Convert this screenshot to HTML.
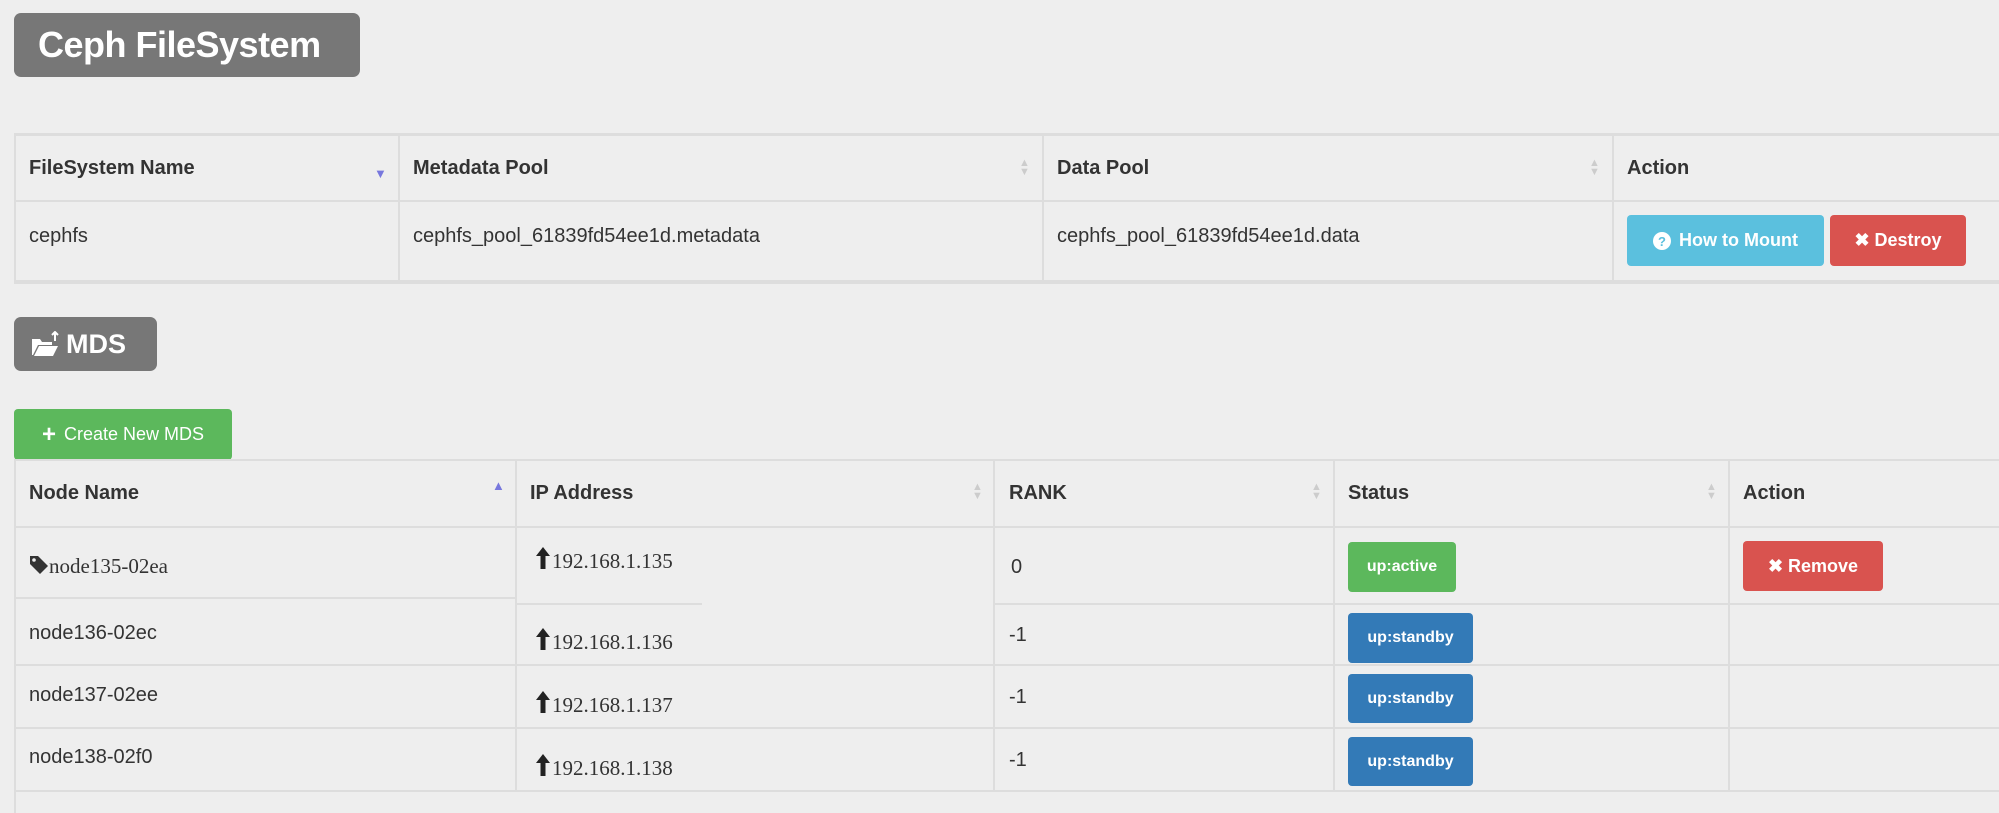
<!DOCTYPE html>
<html><head><meta charset="utf-8"><style>
*{box-sizing:border-box;margin:0;padding:0}
body{width:1999px;height:813px;background:#eeeeee;font-family:"Liberation Sans",Arial,sans-serif;color:#333;position:relative;overflow:hidden}
.a{position:absolute}
.lbl{background:#777;color:#fff;font-weight:bold;border-radius:7px}
.hl{background:#ddd;height:2px}
.vl{background:#ddd;width:2px}
.th{font-weight:bold;font-size:20px;color:#333}
.td{font-size:20px;color:#333}
.btn{color:#fff;font-weight:bold;border-radius:4px;display:flex;align-items:center;justify-content:center;font-size:18px}
.sort{color:#ccc;font-size:11px;line-height:9px;text-align:center}
.ip{font-family:"Liberation Serif",serif;font-size:21px;color:#333}
.ar{vertical-align:-1px;margin-right:1px}
</style></head><body>
<div class="a lbl" style="left:14px;top:13px;width:346px;height:64px;font-size:36px;line-height:64px;padding-left:24px;letter-spacing:-0.5px">Ceph FileSystem</div>

<div class="a hl" style="left:14px;top:133px;width:1985px;height:3px"></div>
<div class="a hl" style="left:14px;top:200px;width:1985px"></div>
<div class="a hl" style="left:14px;top:280px;width:1985px;height:4px"></div>
<div class="a vl" style="left:14px;top:133px;height:150px"></div>
<div class="a vl" style="left:398px;top:135px;height:146px"></div>
<div class="a vl" style="left:1042px;top:135px;height:146px"></div>
<div class="a vl" style="left:1612px;top:135px;height:146px"></div>
<div class="a th" style="left:29px;top:157px">FileSystem Name</div>
<div class="a" style="left:374px;top:166px;color:#7777dd;font-size:13px">▼</div>
<div class="a th" style="left:413px;top:157px">Metadata Pool</div>
<div class="a sort" style="left:1019px;top:159px">▲<br>▼</div>
<div class="a th" style="left:1057px;top:157px">Data Pool</div>
<div class="a sort" style="left:1589px;top:159px">▲<br>▼</div>
<div class="a th" style="left:1627px;top:157px">Action</div>
<div class="a td" style="left:29px;top:225px">cephfs</div>
<div class="a td" style="left:413px;top:225px">cephfs_pool_61839fd54ee1d.metadata</div>
<div class="a td" style="left:1057px;top:225px">cephfs_pool_61839fd54ee1d.data</div>
<div class="a btn" style="left:1627px;top:215px;width:197px;height:51px;background:#5bc0de">
<svg width="18" height="18" viewBox="0 0 18 18" style="margin-right:8px"><circle cx="9" cy="9" r="9" fill="#fff"/><text x="9" y="14" text-anchor="middle" font-size="13" font-weight="bold" fill="#5bc0de" font-family="Liberation Sans">?</text></svg>How to Mount</div>
<div class="a btn" style="left:1830px;top:215px;width:136px;height:51px;background:#d9534f">✖&nbsp;Destroy</div>

<div class="a lbl" style="left:14px;top:317px;width:143px;height:54px;font-size:27px;line-height:54px;padding-left:16px;display:flex;align-items:center">
<svg width="30" height="26" viewBox="0 0 30 26" style="margin-right:6px"><path d="M2 8h8l2 3h10v3H8L3 24H2z" fill="#fff"/><path d="M9 15h19l-5 10H4z" fill="#fff"/><path d="M25 1v9M22 4l3-3 3 3" stroke="#fff" stroke-width="2" fill="none"/></svg>MDS</div>
<div class="a btn" style="left:14px;top:409px;width:218px;height:51px;background:#5cb85c;font-weight:normal;font-size:18px"><b style="font-size:24px;margin-right:8px">+</b>Create New MDS</div>

<div class="a hl" style="left:14px;top:459px;width:1985px"></div>
<div class="a hl" style="left:14px;top:526px;width:1985px"></div>
<div class="a hl" style="left:14px;top:597px;width:502px"></div>
<div class="a hl" style="left:516px;top:603px;width:186px"></div>
<div class="a hl" style="left:994px;top:603px;width:1005px"></div>
<div class="a hl" style="left:14px;top:664px;width:1985px"></div>
<div class="a hl" style="left:14px;top:727px;width:1985px"></div>
<div class="a hl" style="left:14px;top:790px;width:1985px"></div>
<div class="a vl" style="left:14px;top:459px;height:354px"></div>
<div class="a vl" style="left:515px;top:461px;height:330px"></div>
<div class="a vl" style="left:993px;top:461px;height:330px"></div>
<div class="a vl" style="left:1333px;top:461px;height:330px"></div>
<div class="a vl" style="left:1728px;top:461px;height:330px"></div>
<div class="a th" style="left:29px;top:482px">Node Name</div>
<div class="a" style="left:492px;top:478px;color:#7777dd;font-size:13px">▲</div>
<div class="a th" style="left:530px;top:482px">IP Address</div>
<div class="a sort" style="left:972px;top:483px">▲<br>▼</div>
<div class="a th" style="left:1009px;top:482px">RANK</div>
<div class="a sort" style="left:1311px;top:483px">▲<br>▼</div>
<div class="a th" style="left:1348px;top:482px">Status</div>
<div class="a sort" style="left:1706px;top:483px">▲<br>▼</div>
<div class="a th" style="left:1743px;top:482px">Action</div>

<div class="a ip" style="left:29px;top:554px"><svg width="20" height="20" viewBox="0 0 20 20" style="vertical-align:-2px"><path d="M1 1h8l10 10-8 8L1 9z" fill="#333"/><circle cx="5" cy="5" r="1.8" fill="#eee"/></svg>node135-02ea</div>
<div class="td" style="position:absolute;left:29px;top:622px">node136-02ec</div>
<div class="td" style="position:absolute;left:29px;top:684px">node137-02ee</div>
<div class="td" style="position:absolute;left:29px;top:746px">node138-02f0</div>

<div class="a ip" style="left:535px;top:547px"><svg class="ar" width="16" height="22" viewBox="0 0 16 22"><path d="M8 0L15 9H10.5V22H5.5V9H1z" fill="#222"/></svg>192.168.1.135</div>
<div class="a ip" style="left:535px;top:628px"><svg class="ar" width="16" height="22" viewBox="0 0 16 22"><path d="M8 0L15 9H10.5V22H5.5V9H1z" fill="#222"/></svg>192.168.1.136</div>
<div class="a ip" style="left:535px;top:691px"><svg class="ar" width="16" height="22" viewBox="0 0 16 22"><path d="M8 0L15 9H10.5V22H5.5V9H1z" fill="#222"/></svg>192.168.1.137</div>
<div class="a ip" style="left:535px;top:754px"><svg class="ar" width="16" height="22" viewBox="0 0 16 22"><path d="M8 0L15 9H10.5V22H5.5V9H1z" fill="#222"/></svg>192.168.1.138</div>

<div class="a td" style="left:1011px;top:556px">0</div>
<div class="a td" style="left:1009px;top:624px">-1</div>
<div class="a td" style="left:1009px;top:686px">-1</div>
<div class="a td" style="left:1009px;top:749px">-1</div>

<div class="a btn" style="left:1348px;top:542px;width:108px;height:50px;background:#5cb85c;font-size:16px">up:active</div>
<div class="a btn" style="left:1348px;top:613px;width:125px;height:50px;background:#337ab7;font-size:16px">up:standby</div>
<div class="a btn" style="left:1348px;top:674px;width:125px;height:49px;background:#337ab7;font-size:16px">up:standby</div>
<div class="a btn" style="left:1348px;top:737px;width:125px;height:49px;background:#337ab7;font-size:16px">up:standby</div>
<div class="a btn" style="left:1743px;top:541px;width:140px;height:50px;background:#d9534f">✖&nbsp;Remove</div>
</body></html>
